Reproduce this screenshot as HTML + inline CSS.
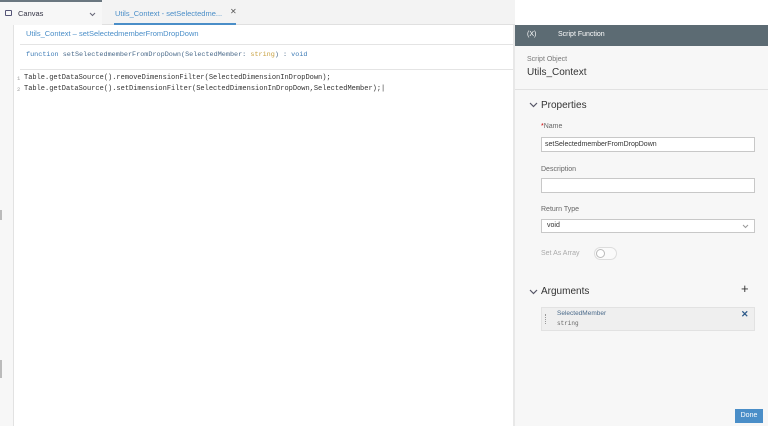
<!DOCTYPE html>
<html><head><style>
*{margin:0;padding:0;box-sizing:border-box}
body{width:768px;height:426px;overflow:hidden;background:#fff;font-family:"Liberation Sans",sans-serif;position:relative;color:#333}
.abs{position:absolute}
.mono{font-family:"Liberation Mono",monospace}
</style></head><body>
<!-- tab bar -->
<div class="abs" style="left:0;top:0;width:515px;height:25px;background:#f3f3f3;border-bottom:1px solid #e0e0e0"></div>
<div class="abs" style="left:0;top:0;width:102px;height:25px;background:#f7f7f7;border-top:2px solid #6a7780"></div>
<div class="abs" style="left:5px;top:10px;width:7px;height:6px;border:1px solid #557;border-radius:1px"></div>
<div class="abs" style="left:18px;top:9px;font-size:7.5px;color:#334">Canvas</div>
<svg class="abs" style="left:89px;top:12px" width="7" height="5"><path d="M1 1L3.5 3.5L6 1" stroke="#667" fill="none"/></svg>
<div class="abs" style="left:115px;top:9px;font-size:7.5px;color:#4a8ec8">Utils_Context - setSelectedme...</div>
<div class="abs" style="left:230px;top:7px;font-size:8px;color:#555">✕</div>
<div class="abs" style="left:114px;top:23px;width:122px;height:2px;background:#4a8ec8"></div>
<!-- left gutter -->
<div class="abs" style="left:0;top:25px;width:14px;height:401px;background:#f7f7f7;border-right:1px solid #e2e2e2"></div>
<div class="abs" style="left:0;top:210px;width:2px;height:10px;background:#bbb"></div>
<div class="abs" style="left:0;top:360px;width:2px;height:18px;background:#bbb"></div>
<!-- editor -->
<div class="abs" style="left:20px;top:44px;width:495px;height:1px;background:#e4e4e4"></div>
<div class="abs" style="left:26px;top:29px;font-size:7.5px;color:#4a8ec8">Utils_Context – setSelectedmemberFromDropDown</div>
<div class="abs mono" style="left:26px;top:51px;font-size:6.8px;color:#4a6a8a;white-space:pre"><span style="color:#3d7bb6">function</span> setSelectedmemberFromDropDown(SelectedMember: <span style="color:#c8a040">string</span>) : <span style="color:#3d7bb6">void</span></div>
<div class="abs" style="left:20px;top:69px;width:495px;height:1px;background:#e4e4e4"></div>
<div class="abs mono" style="left:17px;top:73px;font-size:5.5px;color:#999;line-height:11px">1<br>2</div>
<div class="abs mono" style="left:24px;top:73px;font-size:7px;color:#333;line-height:11px;white-space:pre">Table.getDataSource().removeDimensionFilter(SelectedDimensionInDropDown);
Table.getDataSource().setDimensionFilter(SelectedDimensionInDropDown,SelectedMember);|</div>
<!-- panel -->
<div class="abs" style="left:513px;top:25px;width:3px;height:401px;background:#e8e8e8"></div>
<div class="abs" style="left:515px;top:25px;width:253px;height:401px;background:#f7f7f7"></div>
<div class="abs" style="left:515px;top:25px;width:253px;height:21px;background:#5c6b73"></div>
<div class="abs" style="left:527px;top:31px;font-size:7px;color:#fff">(X)</div>
<div class="abs" style="left:558px;top:31px;font-size:7px;color:#fff">Script Function</div>
<div class="abs" style="left:527px;top:56px;font-size:7px;color:#777">Script Object</div>
<div class="abs" style="left:527px;top:67px;font-size:10px;color:#333">Utils_Context</div>
<div class="abs" style="left:515px;top:89px;width:253px;height:1px;background:#e2e2e2"></div>
<svg class="abs" style="left:529px;top:102px" width="9" height="6"><path d="M1 1L4.5 4.5L8 1" stroke="#556" stroke-width="1.2" fill="none"/></svg>
<div class="abs" style="left:541px;top:100px;font-size:10px;color:#333">Properties</div>
<div class="abs" style="left:541px;top:123px;font-size:7px;color:#666"><span style="color:#c00">*</span>Name</div>
<div class="abs" style="left:541px;top:137px;width:214px;height:15px;background:#fff;border:1px solid #c8c8c8;font-size:7px;padding:3px 3px;color:#333">setSelectedmemberFromDropDown</div>
<div class="abs" style="left:541px;top:166px;font-size:7px;color:#666">Description</div>
<div class="abs" style="left:541px;top:178px;width:214px;height:15px;background:#fff;border:1px solid #c8c8c8"></div>
<div class="abs" style="left:541px;top:206px;font-size:7px;color:#666">Return Type</div>
<div class="abs" style="left:541px;top:219px;width:214px;height:14px;background:#fff;border:1px solid #c8c8c8;font-size:7px;padding:2px 5px;color:#333">void</div>
<svg class="abs" style="left:742px;top:224px" width="7" height="5"><path d="M1 1L3.5 3.5L6 1" stroke="#999" fill="none"/></svg>
<div class="abs" style="left:541px;top:250px;font-size:7px;color:#aaa">Set As Array</div>
<div class="abs" style="left:594px;top:247px;width:23px;height:13px;border:1px solid #ddd;border-radius:7px;background:#fafafa"></div>
<div class="abs" style="left:596px;top:249px;width:9px;height:9px;border:1px solid #bbb;border-radius:50%;background:#fff"></div>
<svg class="abs" style="left:529px;top:289px" width="9" height="6"><path d="M1 1L4.5 4.5L8 1" stroke="#556" stroke-width="1.2" fill="none"/></svg>
<div class="abs" style="left:541px;top:286px;font-size:10px;color:#333">Arguments</div>
<div class="abs" style="left:741px;top:281px;font-size:13px;color:#333">+</div>
<div class="abs" style="left:541px;top:307px;width:214px;height:24px;background:#efefef;border:1px solid #e2e2e2"></div>
<div class="abs" style="left:545px;top:314px;width:1px;height:10px;border-left:1px dotted #999"></div>
<div class="abs" style="left:557px;top:310px;font-size:6.5px;color:#4a6a8a">SelectedMember</div>
<div class="abs mono" style="left:557px;top:320px;font-size:6px;color:#666">string</div>
<div class="abs" style="left:741px;top:309px;font-size:9px;color:#2d5a8a;font-weight:bold">✕</div>
<div class="abs" style="left:735px;top:409px;width:28px;height:14px;background:#4a8ec8;color:#fff;font-size:7px;text-align:center;line-height:14px">Done</div>
</body></html>
